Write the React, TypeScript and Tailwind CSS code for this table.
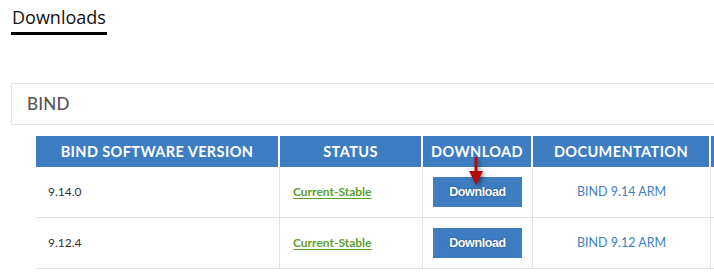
import React from "react";

interface Release {
  version: string;
  status: string;
  docs: string;
}

const releases: Release[] = [
  { version: "9.14.0", status: "Current-Stable", docs: "BIND 9.14 ARM" },
  { version: "9.12.4", status: "Current-Stable", docs: "BIND 9.12 ARM" },
];

const cols = "grid grid-cols-[244px_143px_110px_178px_60px]";

const DownArrow = () => (
  <svg
    width="18"
    height="34"
    viewBox="0 0 18 34"
    className="absolute left-[431px] top-[20px] drop-shadow-[2px_2px_2px_rgba(0,0,0,0.45)]"
  >
    <rect x="7.5" y="1" width="3" height="16" fill="#b30a0a" />
    <polygon points="2,15 16,15 9,29" fill="#b30a0a" />
  </svg>
);

const App = () => {
  return (
    <div className="w-[714px] h-[273px] overflow-hidden bg-white font-['Lato',sans-serif]">
      <div className="pl-[11px] pt-[5px]">
        {/* Page heading */}
        <h2 className="inline-block border-b-[3px] border-black pb-[3px] pl-[1px] pr-[1px] font-['Open_Sans',sans-serif] text-[18px] leading-[24px] text-[#111]">
          Downloads
        </h2>

        {/* Product panel */}
        <div className="mt-[48px] w-[760px] h-[42px] border border-[#e3e3e3] flex items-center pl-[15px]">
          <span className="text-[17px] text-[#555] font-medium tracking-[0.2px]">BIND</span>
        </div>

        {/* Release table */}
        <div className="relative ml-[25px] mt-[11px]">
          <div className={`${cols} h-[31px] bg-[#3e7dc1] text-white font-bold text-[14.5px] tracking-[0.4px]`}>
            <div className="flex items-center justify-center border-r-2 border-white">BIND SOFTWARE VERSION</div>
            <div className="flex items-center justify-center border-r-2 border-white">STATUS</div>
            <div className="flex items-center justify-center border-r-2 border-white">DOWNLOAD</div>
            <div className="flex items-center justify-center border-r-2 border-white">DOCUMENTATION</div>
            <div />
          </div>

          {releases.map((r) => (
            <div key={r.version} className={`${cols} h-[51px] border-b border-[#e3e3e3] text-[12px]`}>
              <div className="flex items-center pl-[12px] border-r border-[#e3e3e3] text-[#333]">{r.version}</div>
              <div className="flex items-center pl-[13px] border-r border-[#e3e3e3]">
                <a href="#" className="font-bold text-[#5ba129] underline underline-offset-2">
                  {r.status}
                </a>
              </div>
              <div className="flex items-center justify-center border-r border-[#e3e3e3]">
                <button className="w-[89px] h-[30px] bg-[#3e7dc1] text-white font-['Liberation_Sans',sans-serif] font-bold text-[12.5px] tracking-[-0.4px] [text-shadow:0_0_2px_rgba(0,0,0,0.45)]">
                  Download
                </button>
              </div>
              <div className="flex items-center justify-center border-r border-[#e3e3e3]">
                <a href="#" className="text-[12.5px] text-[#3f7fc1]">{r.docs}</a>
              </div>
              <div />
            </div>
          ))}

          <DownArrow />
        </div>
      </div>
    </div>
  );
};

export default App;
